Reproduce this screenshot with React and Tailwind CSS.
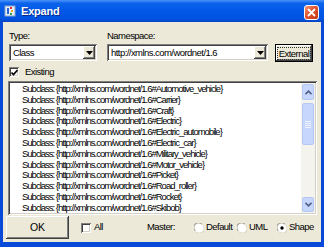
import React from "react";

const items = [
  "Automotive_vehicle",
  "Carrier",
  "Craft",
  "Electric",
  "Electric_automobile",
  "Electric_car",
  "Military_vehicle",
  "Motor_vehicle",
  "Picket",
  "Road_roller",
  "Rocket",
  "Skibob",
];

// classic win2k style bevels
const sunken =
  "shadow-[inset_1px_1px_0_#808080,inset_-1px_-1px_0_#ffffff,inset_2px_2px_0_#404040,inset_-2px_-2px_0_#d4d0c8]";
const raised =
  "shadow-[inset_-1px_-1px_0_#404040,inset_1px_1px_0_#ffffff,inset_-2px_-2px_0_#808080,inset_2px_2px_0_#ece9d8]";

function DownArrow() {
  return (
    <svg width="7" height="4" viewBox="0 0 7 4">
      <path d="M0 0h7L3.5 4z" fill="#000" />
    </svg>
  );
}

function Combo({ value, width }) {
  return (
    <div className={`${width} h-[17px] bg-white ${sunken} flex items-center p-[2px]`}>
      <span className="flex-1 pl-[2px] truncate leading-[13px]">{value}</span>
      <div className={`w-[12px] h-[13px] shrink-0 bg-[#ece9d8] ${raised} flex items-center justify-center`}>
        <DownArrow />
      </div>
    </div>
  );
}

function Checkbox({ checked }) {
  return (
    <div className={`w-[10px] h-[10px] shrink-0 bg-white ${sunken} flex items-center justify-center`}>
      {checked && (
        <svg width="7" height="7" viewBox="0 0 7 7">
          <path d="M0.5 3.5l2 2 4-4.5" stroke="#000" strokeWidth="1.6" fill="none" />
        </svg>
      )}
    </div>
  );
}

function Radio({ checked }) {
  return (
    <svg width="10" height="10" viewBox="0 0 10 10" className="shrink-0">
      <circle cx="5" cy="5" r="4.5" fill="#fff" />
      <path d="M1.1 7.8A4.5 4.5 0 0 1 7.8 1.1" stroke="#808080" strokeWidth="1" fill="none" />
      <path d="M2.2 8.9A4.5 4.5 0 0 0 8.9 2.2" stroke="#d4d0c8" strokeWidth="1" fill="none" />
      {checked && <circle cx="5" cy="5" r="1.7" fill="#000" />}
    </svg>
  );
}

function AppIcon() {
  return (
    <svg width="12" height="12" viewBox="0 0 12 12">
      <rect x="1" y="1" width="10" height="10" fill="#e8eef8" stroke="#8aa4c8" strokeWidth="1" />
      <rect x="3" y="3" width="2" height="6" fill="#2a62d8" />
      <rect x="6" y="2" width="2" height="2" fill="#e03030" />
      <rect x="7" y="5" width="2" height="2" fill="#f0b020" />
      <rect x="6" y="8" width="2" height="2" fill="#30a040" />
    </svg>
  );
}

export default function App() {
  return (
    <div className="w-[324px] h-[247px] flex flex-col bg-[#0a4ad8] overflow-hidden font-['Liberation_Sans',sans-serif] text-[9.5px] -tracking-[0.55px] text-black">
      {/* title bar */}
      <div className="h-[22px] flex items-center pl-[4px] pr-[5px] bg-[linear-gradient(180deg,#4a93f8_0%,#0b63ec_15%,#0258e6_50%,#0153e2_85%,#0443c4_100%)]">
        <AppIcon />
        <span className="ml-[5px] text-white font-bold text-[11px] -tracking-[0.2px] [text-shadow:1px_1px_0_#0a2a8a]">
          Expand
        </span>
        <div className="ml-auto mt-[2px] w-[15px] h-[15px] rounded-[3px] border border-white bg-[linear-gradient(135deg,#f29a78,#e0532e_45%,#c23a16)] flex items-center justify-center">
          <svg width="9" height="9" viewBox="0 0 9 9">
            <path d="M1 1l7 7M8 1l-7 7" stroke="#fff" strokeWidth="1.8" />
          </svg>
        </div>
      </div>

      {/* dialog body */}
      <div className="flex-1 mx-[3px] mb-[5px] bg-[#ece9d8] flex flex-col pl-[5px] pr-[4px]">
        <div className="flex mt-[8px] h-[12px] leading-[12px]">
          <span className="w-[99px] pl-[1px]">Type:</span>
          <span>Namespace:</span>
        </div>

        <div className="flex items-start mt-[2px]">
          <div className="ml-[1px]">
            <Combo value="Class" width="w-[88px]" />
          </div>
          <div className="ml-[10px]">
            <Combo value="http://xmlns.com/wordnet/1.6" width="w-[161px]" />
          </div>
          <button
            className={`ml-[7px] w-[38px] h-[18px] shrink-0 border border-black bg-[#ece9d8] ${raised} flex items-center justify-center leading-[11px]`}
          >
            <span className="outline-1 outline-dotted outline-[#333] px-[1px]">External</span>
          </button>
        </div>

        <div className="flex items-center mt-[4px] h-[12px] pl-[1px]">
          <Checkbox checked />
          <span className="ml-[6px] leading-[12px]">Existing</span>
        </div>

        {/* list */}
        <div className={`mt-[3px] w-[309px] h-[134px] bg-white ${sunken} p-[2px] flex`}>
          <div className="flex-1 pl-[12px] overflow-hidden -tracking-[1px]">
            {items.map((it) => (
              <div key={it} className="h-[10.8px] leading-[11px] whitespace-nowrap">
                Subclass: {"{"}http://xmlns.com/wordnet/1.6#{it}
                {"}"}
              </div>
            ))}
          </div>
          <div className="w-[14px] shrink-0 bg-[#f4f3ee] flex flex-col">
            <div className="h-[16px] m-[1px] mb-0 rounded-[2px] bg-[#c6d6fc] border border-[#b4c8f2] flex items-center justify-center">
              <svg width="7" height="5" viewBox="0 0 7 5">
                <path d="M0.5 4.2L3.5 1.2l3 3" stroke="#4d6185" strokeWidth="1.6" fill="none" />
              </svg>
            </div>
            <div className="h-[42px] mx-[1px] mt-[3px] rounded-[2px] bg-[#c6d6fc] border border-[#b4c8f2] flex flex-col items-center justify-center gap-[1px]">
              <div className="w-[6px] h-[1px] bg-[#eef3fe]" />
              <div className="w-[6px] h-[1px] bg-[#eef3fe]" />
              <div className="w-[6px] h-[1px] bg-[#eef3fe]" />
              <div className="w-[6px] h-[1px] bg-[#eef3fe]" />
            </div>
            <div className="flex-1" />
            <div className="h-[15px] m-[1px] mt-0 rounded-[2px] bg-[#c6d6fc] border border-[#b4c8f2] flex items-center justify-center">
              <svg width="7" height="5" viewBox="0 0 7 5">
                <path d="M0.5 0.8L3.5 3.8l3-3" stroke="#4d6185" strokeWidth="1.6" fill="none" />
              </svg>
            </div>
          </div>
        </div>

        {/* bottom row */}
        <div className="flex items-start mt-[1px]">
          <button className={`-ml-[2px] w-[63px] h-[23px] shrink-0 bg-[#ece9d8] ${raised} flex items-center justify-center text-[10.5px] tracking-normal`}>
            OK
          </button>
          <div className="flex items-center h-[23px] ml-[12px]">
            <Checkbox />
            <span className="ml-[3px] w-[53px]">All</span>
            <span className="w-[47px]">Master:</span>
            <Radio />
            <span className="pl-[2px] w-[33px]">Default</span>
            <Radio />
            <span className="pl-[2px] w-[30px]">UML</span>
            <Radio checked />
            <span className="pl-[2px]">Shape</span>
          </div>
        </div>
      </div>
    </div>
  );
}
